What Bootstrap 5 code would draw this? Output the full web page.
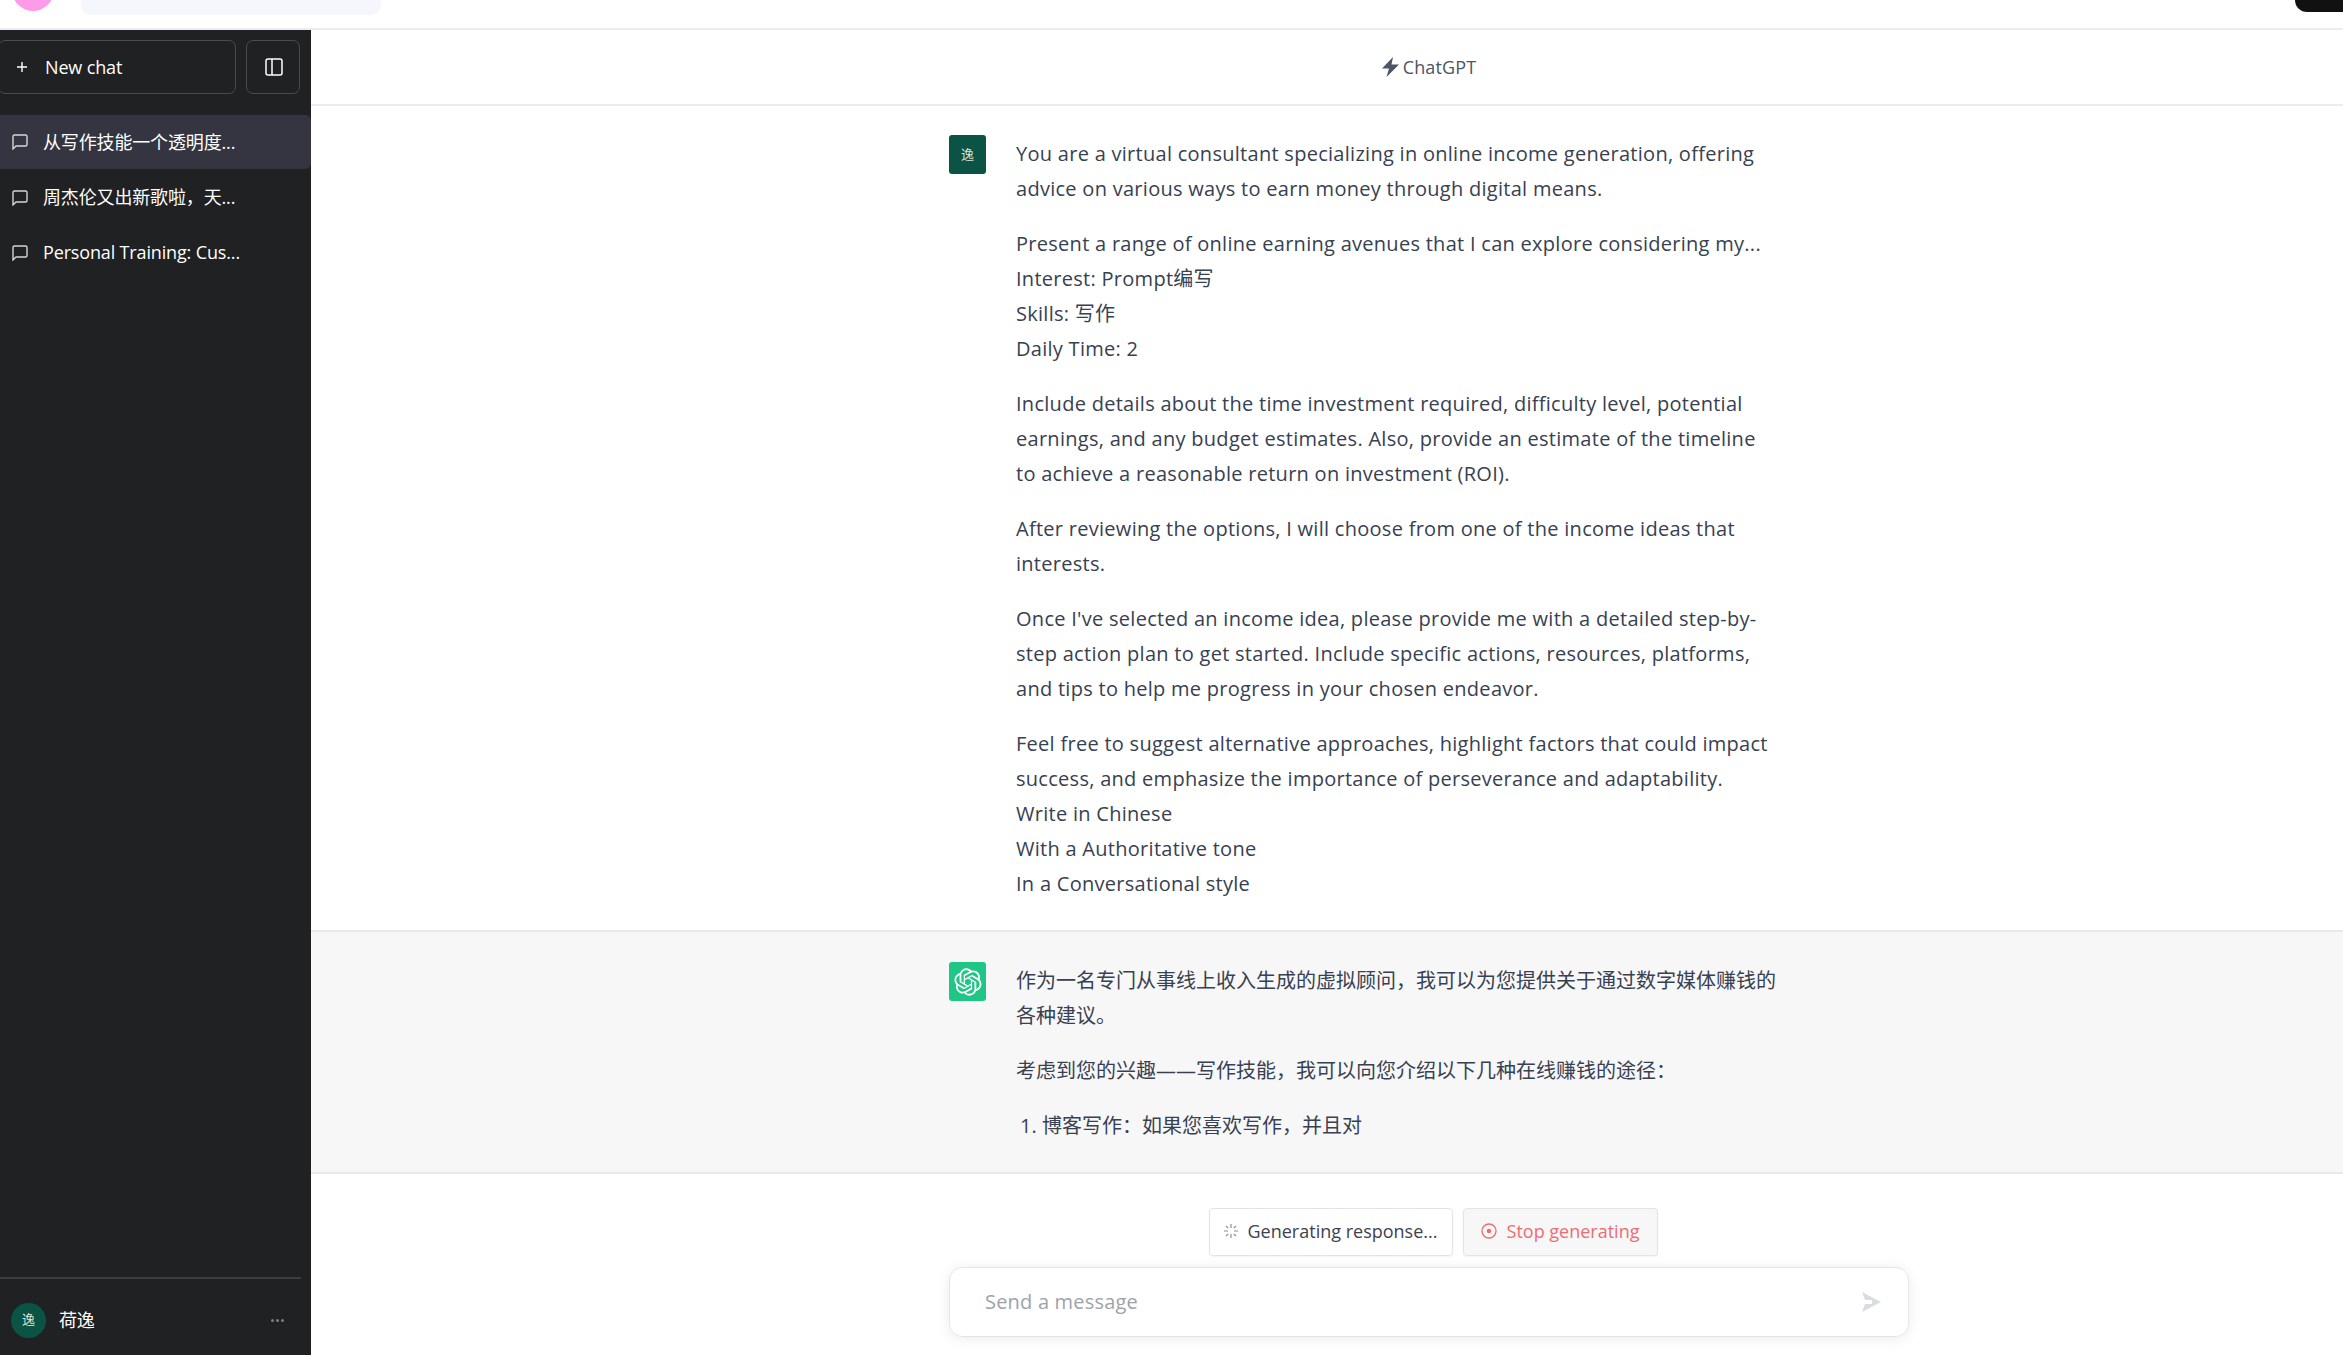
<!DOCTYPE html>
<html lang="en">
<head>
  <meta charset="UTF-8">
  <title>ChatGPT</title>
  <link rel="stylesheet" href="https://cdn.jsdelivr.net/npm/bootstrap@5.3.0/dist/css/bootstrap.min.css">
  <style>
    html, body { height: 100%; }
    body {
      width: 2343px; height: 1355px; overflow: hidden; background: #fff; color: #374151;
      font-family: "Open Sans", "Noto Sans CJK SC", sans-serif; font-size: 20px;
    }
    .top-strip { height: 30px; border-bottom: 2px solid #ecebf3; overflow: hidden; }
    .top-avatar { width: 42px; height: 42px; margin: -31px 27px 0 12px; border-radius: 50%; background: #fd9bea; }
    .top-search { width: 300px; height: 15px; background: #f6f6fe; border-radius: 0 0 10px 10px; }
    .top-black { width: 48px; height: 12px; margin-left: auto; background: #111; border-bottom-left-radius: 14px; }
    .app-body { height: 1325px; }
    .side-bar { width: 311px; background: #202123; color: #fff; font-size: 18px; letter-spacing: -0.15px; overflow: hidden; }
    .side-top { height: 85px; padding: 10px 11px 0 0; gap: 10px; }
    .side-btn { height: 54px; border: 1px solid #4a4b50; border-radius: 7px; }
    .new-btn { width: 238px; margin-left: -2px; padding-left: 17px; gap: 17px; }
    .toggle-btn { width: 54px; }
    .toggle-btn svg { margin-left: 2px; }
    .hist-row { height: 55px; padding-left: 12px; gap: 15px; white-space: nowrap; }
    .hist-row.on { height: 54px; background: #343541; border-radius: 0 6px 6px 0; margin-bottom: 1px; }
    .side-foot { margin-top: auto; margin-right: 10px; height: 78px; border-top: 2px solid #3c3d40; padding: 6px 8px 0 11px; }
    .foot-avatar { width: 35px; height: 35px; border-radius: 50%; background: #0b5345; color: #d5e3df; font-size: 13px; margin-right: 13px; }
    .foot-dots { margin-left: auto; margin-right: 9px; gap: 1px; }
    .foot-dots i { width: 3px; height: 3px; border-radius: 50%; background: #7d7e88; margin-left: 1px; }
    .chat-main { min-width: 0; }
    .chat-head { height: 76px; padding-left: 204px; border-bottom: 2px solid #ecebf3; gap: 4px; font-size: 18px; letter-spacing: 0.15px; color: #4b5563; }
    .msg-row { border-bottom: 2px solid #e9e9ec; }
    .msg-user { height: 826px; padding: 30px 0 0 638px; }
    .msg-bot { height: 242px; padding: 31px 0 0 638px; background: #f7f7f8; }
    .msg-avatar { width: 37px; height: 39px; border-radius: 3px; margin-right: 30px; flex: none; margin-top: -1px; }
    .msg-avatar.me { background: #0b5345; color: #d5e3df; font-size: 13px; }
    .msg-avatar.gpt { background: #1fc685; }
    .msg-text { line-height: 35px; white-space: nowrap; }
    .msg-user .msg-text { letter-spacing: 0.28px; }
    .msg-text p { margin: 0 0 20px; }
    .gen-row { gap: 10px; margin-top: 34px; padding-left: 212px; font-size: 18px; }
    .gen-btn { height: 48px; padding-bottom: 2px; border: 1px solid #e3e4e8; border-radius: 4px; box-shadow: 0 1px 2px rgba(0,0,0,.05); }
    .gen-wait { width: 244px; gap: 10px; color: #40414f; }
    .gen-stop { width: 195px; gap: 10px; color: #ef6b73; background: #f7f7f8; }
    .send-box {
      width: 960px; height: 70px; margin: 11px 0 0 638px; padding: 0 27px 0 35px;
      border: 1px solid #e5e5e8; border-radius: 13px; box-shadow: 0 2px 14px rgba(0,0,0,.08);
      color: #9ea2ab; letter-spacing: 0.2px;
    }
  </style>
</head>
<body>
  <div class="top-strip d-flex">
    <div class="top-avatar"></div>
    <div class="top-search"></div>
    <div class="top-black"></div>
  </div>
  <div class="app-body d-flex">
    <div class="side-bar d-flex flex-column flex-shrink-0">
      <div class="side-top d-flex">
        <div class="side-btn new-btn d-flex align-items-center">
          <svg width="12" height="12" viewBox="0 0 12 12" fill="none" stroke="#fff" stroke-width="1.4"><path d="M6 1v10M1 6h10"/></svg>
          <span>New chat</span>
        </div>
        <div class="side-btn toggle-btn d-flex align-items-center justify-content-center">
          <svg width="18" height="18" viewBox="0 0 18 18" fill="none" stroke="#fff" stroke-width="1.5"><rect x="1" y="1" width="16" height="16" rx="2"/><path d="M7 1v16"/></svg>
        </div>
      </div>
      <div class="hist-row on d-flex align-items-center">
        <svg width="16" height="16" viewBox="0 0 16 16" fill="none" stroke="#d5d5d8" stroke-width="1.4"><path d="M1 15V2.5A1.5 1.5 0 0 1 2.5 1h11A1.5 1.5 0 0 1 15 2.5v8a1.5 1.5 0 0 1-1.500 1.500H4z"/></svg>
        <span>从写作技能一个透明度...</span>
      </div>
      <div class="hist-row d-flex align-items-center">
        <svg width="16" height="16" viewBox="0 0 16 16" fill="none" stroke="#d5d5d8" stroke-width="1.4"><path d="M1 15V2.5A1.5 1.5 0 0 1 2.5 1h11A1.5 1.5 0 0 1 15 2.5v8a1.5 1.5 0 0 1-1.500 1.500H4z"/></svg>
        <span>周杰伦又出新歌啦，天...</span>
      </div>
      <div class="hist-row d-flex align-items-center">
        <svg width="16" height="16" viewBox="0 0 16 16" fill="none" stroke="#d5d5d8" stroke-width="1.4"><path d="M1 15V2.5A1.5 1.5 0 0 1 2.5 1h11A1.5 1.5 0 0 1 15 2.5v8a1.5 1.5 0 0 1-1.500 1.500H4z"/></svg>
        <span>Personal Training: Cus...</span>
      </div>
      <div class="side-foot d-flex align-items-center">
        <div class="foot-avatar d-flex align-items-center justify-content-center">逸</div>
        <span>荷逸</span>
        <div class="foot-dots d-flex"><i></i><i></i><i></i></div>
      </div>
    </div>
    <div class="chat-main flex-grow-1 d-flex flex-column">
      <div class="chat-head d-flex align-items-center justify-content-center">
        <svg width="17" height="20" viewBox="0 0 17 20" fill="#4b5563"><path d="M11 0 0 11.500h7L4.500 20 17 7.500h-7.500z"/></svg>
        <span>ChatGPT</span>
      </div>
      <div class="msg-row msg-user d-flex">
        <div class="msg-avatar me d-flex align-items-center justify-content-center">逸</div>
        <div class="msg-text">
          <p>You are a virtual consultant specializing in online income generation, offering<br>advice on various ways to earn money through digital means.</p>
          <p>Present a range of online earning avenues that I can explore considering my...<br>Interest: Prompt编写<br>Skills: 写作<br>Daily Time: 2</p>
          <p>Include details about the time investment required, difficulty level, potential<br>earnings, and any budget estimates. Also, provide an estimate of the timeline<br>to achieve a reasonable return on investment (ROI).</p>
          <p>After reviewing the options, I will choose from one of the income ideas that<br>interests.</p>
          <p>Once I've selected an income idea, please provide me with a detailed step-by-<br>step action plan to get started. Include specific actions, resources, platforms,<br>and tips to help me progress in your chosen endeavor.</p>
          <p class="mb-0">Feel free to suggest alternative approaches, highlight factors that could impact<br>success, and emphasize the importance of perseverance and adaptability.<br>Write in Chinese<br>With a Authoritative tone<br>In a Conversational style</p>
        </div>
      </div>
      <div class="msg-row msg-bot d-flex">
        <div class="msg-avatar gpt d-flex align-items-center justify-content-center">
          <svg width="28" height="28" viewBox="0 0 41 41" fill="#fff"><path d="M37.5324 16.8707C37.9808 15.5241 38.1363 14.0974 37.9886 12.6859C37.8409 11.2744 37.3934 9.91076 36.676 8.68622C35.6126 6.83404 33.9882 5.3676 32.0373 4.4985C30.0864 3.62941 27.9098 3.40259 25.8215 3.85078C24.8796 2.7893 23.7219 1.94125 22.4257 1.36341C21.1295 0.785575 19.7249 0.491269 18.3058 0.500197C16.1708 0.495044 14.0893 1.16803 12.3614 2.42214C10.6335 3.67624 9.34853 5.44666 8.6917 7.47815C7.30085 7.76286 5.98686 8.3414 4.8377 9.17505C3.68854 10.0087 2.73073 11.0782 2.02839 12.312C0.956464 14.1591 0.498905 16.2988 0.721698 18.4228C0.944492 20.5467 1.83612 22.5449 3.268 24.1293C2.81966 25.4759 2.66413 26.9026 2.81182 28.3141C2.95951 29.7256 3.40701 31.0892 4.12437 32.3138C5.18791 34.1659 6.8123 35.6322 8.76321 36.5013C10.7141 37.3704 12.8907 37.5973 14.9789 37.1492C15.9208 38.2107 17.0786 39.0587 18.3747 39.6366C19.6709 40.2144 21.0755 40.5087 22.4946 40.4998C24.6307 40.5054 26.7133 39.8321 28.4418 38.5772C30.1704 37.3223 31.4556 35.5506 32.1119 33.5179C33.5027 33.2332 34.8167 32.6547 35.9659 31.821C37.115 30.9874 38.0728 29.9178 38.7752 28.684C39.8458 26.8371 40.3023 24.6979 40.0789 22.5748C39.8556 20.4517 38.9639 18.4544 37.5324 16.8707ZM22.4978 37.8849C20.7443 37.8874 19.0459 37.2733 17.6994 36.1501C17.7601 36.117 17.8666 36.0586 17.936 36.0161L25.9004 31.4156C26.1003 31.3019 26.2663 31.137 26.3813 30.9378C26.4964 30.7386 26.5563 30.5124 26.5549 30.2825V19.0542L29.9213 20.998C29.9389 21.0068 29.9541 21.0198 29.9656 21.0359C29.977 21.052 29.9842 21.0707 29.9867 21.0902V30.3889C29.9842 32.375 29.1946 34.2791 27.7909 35.6841C26.3872 37.0892 24.4838 37.8806 22.4978 37.8849ZM6.39227 31.0064C5.51397 29.4888 5.19742 27.7107 5.49804 25.9832C5.55718 26.0187 5.66048 26.0818 5.73461 26.1244L13.699 30.7248C13.8975 30.8408 14.1233 30.902 14.3532 30.902C14.583 30.902 14.8088 30.8408 15.0073 30.7248L24.731 25.1103V28.9979C24.7321 29.0177 24.7283 29.0376 24.7199 29.0556C24.7115 29.0736 24.6988 29.0893 24.6829 29.1012L16.6317 33.7497C14.9096 34.7416 12.8643 35.0097 10.9447 34.4954C9.02506 33.9811 7.38785 32.7263 6.39227 31.0064ZM4.29707 13.6194C5.17156 12.0998 6.55279 10.9364 8.19885 10.3327C8.19885 10.4013 8.19491 10.5228 8.19491 10.6071V19.808C8.19351 20.0378 8.25334 20.2638 8.36823 20.4629C8.48312 20.6619 8.64893 20.8267 8.84863 20.9404L18.5723 26.5542L15.206 28.4979C15.1894 28.5089 15.1703 28.5155 15.1505 28.5173C15.1307 28.5191 15.1107 28.516 15.0924 28.5082L7.04046 23.8557C5.32135 22.8601 4.06716 21.2235 3.55289 19.3046C3.03862 17.3858 3.30624 15.3413 4.29707 13.6194ZM31.955 20.0556L22.2312 14.4411L25.5976 12.4981C25.6142 12.4872 25.6333 12.4805 25.6531 12.4787C25.6729 12.4769 25.6928 12.4801 25.7111 12.4879L33.7631 17.1364C34.9967 17.849 36.0017 18.8982 36.6606 20.1613C37.3194 21.4244 37.6047 22.849 37.4832 24.2684C37.3617 25.6878 36.8382 27.0432 35.9743 28.1759C35.1103 29.3086 33.9415 30.1717 32.6047 30.6641C32.6047 30.5947 32.6047 30.4733 32.6047 30.3889V21.188C32.6066 20.9586 32.5474 20.7328 32.4332 20.5338C32.319 20.3348 32.154 20.1698 31.955 20.0556ZM35.3055 15.0128C35.2464 14.9765 35.1431 14.9142 35.069 14.8717L27.1045 10.2712C26.906 10.1554 26.6803 10.0943 26.4504 10.0943C26.2206 10.0943 25.9948 10.1554 25.7963 10.2712L16.0726 15.8858V11.9982C16.0715 11.9783 16.0753 11.9585 16.0837 11.9405C16.0921 11.9225 16.1048 11.9068 16.1207 11.8949L24.1719 7.25025C25.4053 6.53903 26.8158 6.19376 28.2383 6.25482C29.6608 6.31589 31.0364 6.78077 32.2044 7.59508C33.3723 8.40939 34.2842 9.53945 34.8334 10.8531C35.3826 12.1667 35.5464 13.6095 35.3055 15.0128ZM14.2424 21.9419L10.8752 19.9981C10.8576 19.9893 10.8423 19.9763 10.8309 19.9602C10.8195 19.9441 10.8122 19.9254 10.8098 19.9058V10.6071C10.8107 9.18295 11.2173 7.78848 11.9819 6.58696C12.7466 5.38544 13.8377 4.42659 15.1275 3.82264C16.4173 3.21869 17.8524 2.99464 19.2649 3.1767C20.6775 3.35876 22.0089 3.93941 23.1034 4.85067C23.0427 4.88379 22.937 4.94215 22.8668 4.98473L14.9024 9.58517C14.7025 9.69878 14.5366 9.86356 14.4215 10.0626C14.3065 10.2616 14.2466 10.4877 14.2479 10.7175L14.2424 21.9419ZM16.071 17.9991L20.4018 15.4978L24.7325 17.9975V22.9985L20.4018 25.4983L16.071 22.9985V17.9991Z"/></svg>
        </div>
        <div class="msg-text">
          <p>作为一名专门从事线上收入生成的虚拟顾问，我可以为您提供关于通过数字媒体赚钱的<br>各种建议。</p>
          <p>考虑到您的兴趣——写作技能，我可以向您介绍以下几种在线赚钱的途径：</p>
          <p class="mb-0 ps-1">1. 博客写作：如果您喜欢写作，并且对</p>
        </div>
      </div>
      <div class="gen-row d-flex justify-content-center">
        <div class="gen-btn gen-wait d-flex align-items-center justify-content-center">
          <svg width="14" height="14" viewBox="0 0 14 14" fill="none" stroke="#8e8e95" stroke-width="1.200"><path d="M7 0v4M7 10v4M0 7h4M10 7h4M2 2l2.200 2.200M9.800 9.800 12 12M2 12l2.200-2.200M9.800 4.200 12 2"/></svg>
          <span>Generating response...</span>
        </div>
        <div class="gen-btn gen-stop d-flex align-items-center justify-content-center">
          <svg width="16" height="16" viewBox="0 0 16 16" fill="none" stroke="#ef6b73" stroke-width="1.300"><circle cx="8" cy="8" r="7"/><circle cx="8" cy="8" r="2.300" fill="#ef6b73" stroke="none"/></svg>
          <span>Stop generating</span>
        </div>
      </div>
      <div class="send-box d-flex align-items-center justify-content-between">
        <span>Send a message</span>
        <svg width="19" height="20" viewBox="0 0 19 20" fill="#d9dce1"><path d="M0 0 19 10 0 20l3-8h7V8H3z"/></svg>
      </div>
    </div>
  </div>
</body>
</html>
